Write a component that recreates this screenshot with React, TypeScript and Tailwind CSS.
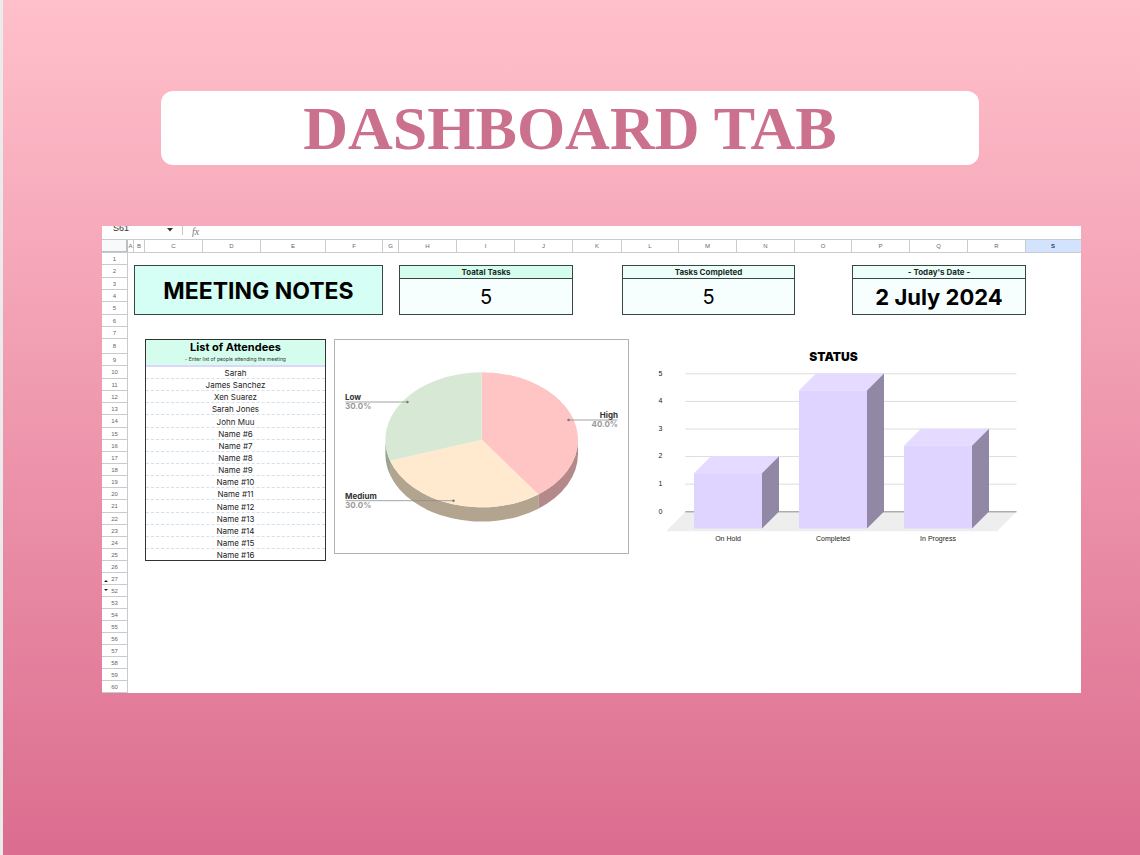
import React from 'react'
import clsx from 'clsx'

const columns = ['A', 'B', 'C', 'D', 'E', 'F', 'G', 'H', 'I', 'J', 'K', 'L', 'M', 'N', 'O', 'P', 'Q', 'R', 'S'];

const columnGrid = 'grid grid-cols-[6fr_11fr_58fr_58fr_65fr_57fr_16fr_58fr_58fr_58fr_49fr_57fr_58fr_58fr_57fr_58fr_58fr_58fr_55fr]';

// rows 28 to 51 are hidden
const rows = [
    ...Array.from({ length: 27 }, (_, i) => i + 1),
    ...Array.from({ length: 9 }, (_, i) => i + 52),
];

const tallRows = [2, 5, 10, 14, 21];

const attendees = ['Sarah', 'James Sanchez', 'Xen Suarez', 'Sarah Jones', 'John Muu'].concat(
    Array.from({ length: 11 }, (_, i) => 'Name #' + (i + 6))
);

const bars = [
    { label: 'On Hold', value: 2, x: 65 },
    { label: 'Completed', value: 5, x: 170 },
    { label: 'In Progress', value: 3, x: 275 },
];

const Toolbar = () => (
    <div className="h-[13px] overflow-hidden">
        <div className="-mt-1 flex h-[17px] items-start pl-[11px]">
            <input aria-label="Name box" defaultValue="S61" className="h-3 w-[54px] bg-transparent p-0 text-[9px] leading-3 text-[#333] outline-none" />
            <button aria-label="Open name list" className="flex h-3 w-[15px] items-center pt-1">
                <svg viewBox="0 0 6 4" className="h-1 w-1.5"><path d="M0 0h6L3 3.6z" fill="#333" /></svg>
            </button>
            <span className="h-[13px] border-l border-[#c7c7c7]" />
            <span className="pt-1 pl-[9px] font-['Liberation_Serif',serif] text-[10px] leading-3 italic text-[#777]">fx</span>
        </div>
    </div>
)

const ColumnHeader = () => (
    <div className="flex h-[14px] border-y border-[#c9cbcc] text-[6px] leading-3 text-[#666]">
        <div className="w-[26px] shrink-0 border-r-2 border-b border-[#bdbfc1] bg-[#f8f9fa]" />
        <div className={clsx(columnGrid, 'flex-1')}>
            {columns.map((name) => (
                <div
                    key={name}
                    className={clsx(
                        'min-w-0 border-r text-center',
                        name === 'S' ? 'border-[#d3e3fd] bg-[#d3e3fd] font-bold text-[#1b3a6b]' : 'border-[#c9cbcc]'
                    )}
                >
                    {name}
                </div>
            ))}
        </div>
    </div>
)

const RowHeader = () => (
    <div className="w-[26px] shrink-0 border-r border-[#c9cbcc] text-center text-[6px] leading-[13px] text-[#666]">
        {rows.map((row) => (
            <div key={row} className={clsx('relative border-b border-[#c9cbcc]', row === 8 ? 'h-[15px] pt-px' : tallRows.includes(row) ? 'h-[13px]' : 'h-3')}>
                {row}
                {row === 27 && (
                    <button aria-label="Show hidden rows above" className="absolute bottom-0.5 left-0.5">
                        <svg viewBox="0 0 4 2" className="block h-0.5 w-1"><path d="M0 2h4L2 0z" fill="#222" /></svg>
                    </button>
                )}
                {row === 52 && (
                    <button aria-label="Show hidden rows below" className="absolute top-1 left-0.5">
                        <svg viewBox="0 0 4 2" className="block h-0.5 w-1"><path d="M0 0h4L2 2z" fill="#222" /></svg>
                    </button>
                )}
            </div>
        ))}
    </div>
)

interface CardProps {
    title: string
    value: string
    className: string
    headClassName: string
    valueClassName: string
}

const Card = ({ title, value, className, headClassName, valueClassName }: CardProps) => (
    <section className={clsx('border border-[#3a4644] bg-[#f6fffd] text-center', className)}>
        <h3 className={clsx('h-[13px] border-b border-[#3a4644] text-[8px] leading-3 font-bold text-[#1c2b28]', headClassName)}>{title}</h3>
        <p className={clsx('pt-0.5 leading-[33px] text-black', valueClassName)}>{value}</p>
    </section>
)

const Attendees = () => (
    <table className="w-full table-fixed border-separate border-spacing-0 border border-[#333] text-center">
        <thead className="bg-[#d5fdee]">
            <tr>
                <th className="h-[14px] p-0 text-[11px] leading-[14px] font-bold text-black">List of Attendees</th>
            </tr>
            <tr>
                <td className="h-[13px] border-b-2 border-[#dcd6fb] p-0 text-[5px] leading-[11px] whitespace-nowrap text-[#333]">- Enter list of people attending the meeting</td>
            </tr>
        </thead>
        <tbody className="text-[8px] leading-[9px] text-[#222]">
            {attendees.map((name, i) => (
                <tr key={name}>
                    <td
                        className={clsx(
                            'px-0 pt-0.5 pb-0',
                            i === attendees.length - 1 ? 'h-[11px]' : 'border-b border-dashed border-[#d3dfec]',
                            i === 4 || i === 11 ? 'h-[13px]' : i < attendees.length - 1 && 'h-3'
                        )}
                    >
                        {name}
                    </td>
                </tr>
            ))}
        </tbody>
    </table>
)

const PriorityChart = () => (
    <div className="border border-[#b3b3b3]">
        <svg viewBox="0 0 293 213" className="block w-full font-['Inter',sans-serif] text-[8px] font-bold" role="img" aria-label="Tasks by priority">
            <path d="M243 100A96.3 67.5 0 0 1 203.3 154.4V168.7A96.3 67.5 0 0 0 243 114.3z" fill="#b38989" />
            <path d="M203.3 154.4A96.3 67.5 0 0 1 55.1 120.7V135A96.3 67.5 0 0 0 203.3 168.7z" fill="#b2a48f" />
            <path d="M55.1 120.7A96.3 67.5 0 0 1 50.4 100V114.3A96.3 67.5 0 0 0 55.1 135z" fill="#97a494" />
            <path d="M146.7 99.8V32.3A96.3 67.5 0 0 1 203.3 154.4z" fill="#ffc5c5" />
            <path d="M146.7 99.8L203.3 154.4A96.3 67.5 0 0 1 55.1 120.7z" fill="#ffeacf" />
            <path d="M146.7 99.8L55.1 120.7A96.3 67.5 0 0 1 146.7 32.3z" fill="#d7e9d4" />
            <g stroke="#8c8c8c" strokeWidth="0.8">
                <path d="M10.5 62H72.5M282.5 80H233.5M10.5 160.7H118.5" fill="none" />
            </g>
            <g fill="#777">
                <circle cx="72.5" cy="62" r="1.2" />
                <circle cx="233.5" cy="80" r="1.2" />
                <circle cx="118.5" cy="160.7" r="1.2" />
            </g>
            <g fill="#333">
                <text x="10" y="60">Low</text>
                <text x="283" y="78" textAnchor="end">High</text>
                <text x="10" y="159">Medium</text>
            </g>
            <g fill="#999">
                <text x="10" y="69">30.0%</text>
                <text x="283" y="87" textAnchor="end">40.0%</text>
                <text x="10" y="168">30.0%</text>
            </g>
        </svg>
    </div>
)

const StatusChart = () => (
    <svg viewBox="0 0 452 215" className="block w-full font-['Liberation_Sans',sans-serif] text-[7px]" role="img" aria-label="Tasks by status">
        <text x="204.5" y="22" textAnchor="middle" className="font-['Inter',sans-serif] text-[12px] font-black">STATUS</text>
        <path d="M56.3 172.8H387.5L368 192.3H37z" fill="#eee" />
        {[0, 1, 2, 3, 4, 5].map((n) => (
            <g key={n}>
                <path d={`M56.3 ${172.8 - n * 27.6}H387.5`} stroke={n === 0 ? '#8a8a8a' : '#dcdcdc'} strokeWidth="1" />
                <text x="31.5" y={174.6 - n * 27.6} textAnchor="middle" fill="#222">{n}</text>
            </g>
        ))}
        {bars.map(({ label, value, x }) => {
            const top = 189.5 - value * 27.6
            return (
                <g key={label}>
                    <path d={`M${x} ${top}l17 -17h68l-17 17z`} fill="#e5daff" />
                    <path d={`M${x + 68} ${top}l17 -17V172.5l-17 17z`} fill="#9188a6" />
                    <path d={`M${x} ${top}h68V189.5h-68z`} fill="#dfd3ff" />
                    <text x={x + 34} y="202" textAnchor="middle" fill="#222">{label}</text>
                </g>
            )
        })}
    </svg>
)

const Sheet = () => (
    <section className="overflow-hidden bg-white font-['Liberation_Sans',sans-serif]">
        <Toolbar />
        <ColumnHeader />
        <div className="flex">
            <RowHeader />
            <div className="min-w-0 flex-1 pt-3 font-['Inter',sans-serif]">
                <div className={clsx(columnGrid, 'h-[50px]')}>
                    <h2 className="col-start-2 col-end-7 flex items-center justify-center border border-[#3a4644] bg-[#d5fff5] pt-px text-[23px] leading-6 font-bold text-black">MEETING NOTES</h2>
                    <Card title="Toatal Tasks" value="5" className="col-start-8 col-end-11" headClassName="bg-[#d5fdee]" valueClassName="text-[20px]" />
                    <Card title="Tasks Completed" value="5" className="col-start-12 col-end-15" headClassName="bg-[#edfff9]" valueClassName="text-[20px]" />
                    <Card title="- Today's Date -" value="2 July 2024" className="col-start-16 col-end-19" headClassName="bg-[#edfff9]" valueClassName="text-[22px] font-bold" />
                </div>
                <div className="mt-6 grid grid-cols-[181fr_8fr_295fr_452fr] items-start pl-[17px]">
                    <Attendees />
                    <div className="col-start-3">
                        <PriorityChart />
                    </div>
                    <StatusChart />
                </div>
            </div>
        </div>
    </section>
)

export default function App() {
    return (
        <main className="min-h-screen border-l-[3px] border-[#ebebeb] bg-linear-to-b from-[#ffc0cb] to-[#db6d90]">
            <div className="pt-[91px] pr-[59px] pl-[99px]">
                <h1 className="mr-[102px] ml-[59px] rounded-xl bg-white text-center font-['Liberation_Serif',serif] text-[62px] leading-[74px] font-bold text-[#cb708d]">
                    DASHBOARD TAB
                </h1>
                <div className="mt-[61px]">
                    <Sheet />
                </div>
            </div>
        </main>
    )
}
